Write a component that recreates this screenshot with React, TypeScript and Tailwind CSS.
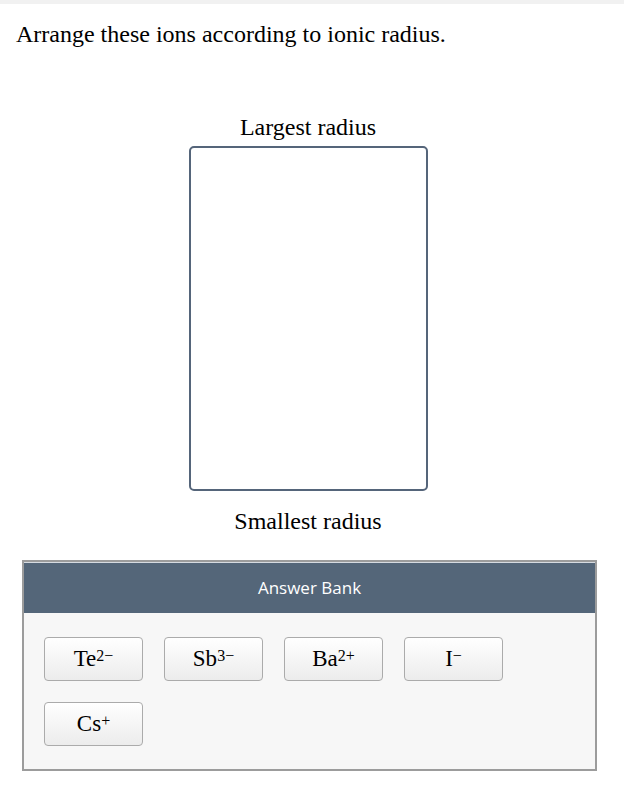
import type { ReactNode } from "react";

type Ion = { symbol: string; charge: string };

const ions: Ion[] = [
  { symbol: "Te", charge: "2−" },
  { symbol: "Sb", charge: "3−" },
  { symbol: "Ba", charge: "2+" },
  { symbol: "I", charge: "−" },
  { symbol: "Cs", charge: "+" },
];

const serif = "font-['Liberation_Serif','Times_New_Roman',serif]";

function IonChip({ ion }: { ion: Ion }) {
  return (
    <button
      className={`flex h-[44px] w-[99px] items-center justify-center rounded-[4px] border border-[#ababab] bg-gradient-to-b from-white to-[#ececec] text-[23px] text-black ${serif}`}
      type="button"
    >
      {ion.symbol}
      <sup className="relative -top-[3px] text-[16px] leading-none">{ion.charge}</sup>
    </button>
  );
}

function Label({ children }: { children: ReactNode }) {
  return <div className={`text-center text-[24px] leading-[28px] text-black ${serif}`}>{children}</div>;
}

export default function App() {
  return (
    <div className="min-h-[792px] w-[624px] bg-white">
      <div className="h-[4px] bg-[#f1f1f1]" />
      <h1 className={`px-[16px] pt-[16px] text-[24px] leading-[28px] text-black ${serif}`}>
        Arrange these ions according to ionic radius.
      </h1>

      <div className="mt-[65px] flex flex-col items-center pr-[8px]">
        <Label>Largest radius</Label>
        <div className="mt-[5px] h-[345px] w-[239px] rounded-[5px] border-2 border-[#55657a] bg-white" />
        <div className="mt-[16px]">
          <Label>Smallest radius</Label>
        </div>
      </div>

      <div className="ml-[22px] mt-[25px] w-[575px] border-2 border-[#9c9c9c]">
        <div className="flex h-[51px] items-center justify-center border-t border-[#d6dbe1] bg-[#546679] font-['Open_Sans','Noto_Sans',sans-serif] text-[17px] text-white">
          Answer Bank
        </div>
        <div className="flex flex-wrap gap-x-[21px] gap-y-[21px] bg-[#f7f7f7] px-[20px] pb-[23px] pt-[24px]">
          {ions.map((ion) => (
            <IonChip ion={ion} key={ion.symbol} />
          ))}
        </div>
      </div>
    </div>
  );
}
